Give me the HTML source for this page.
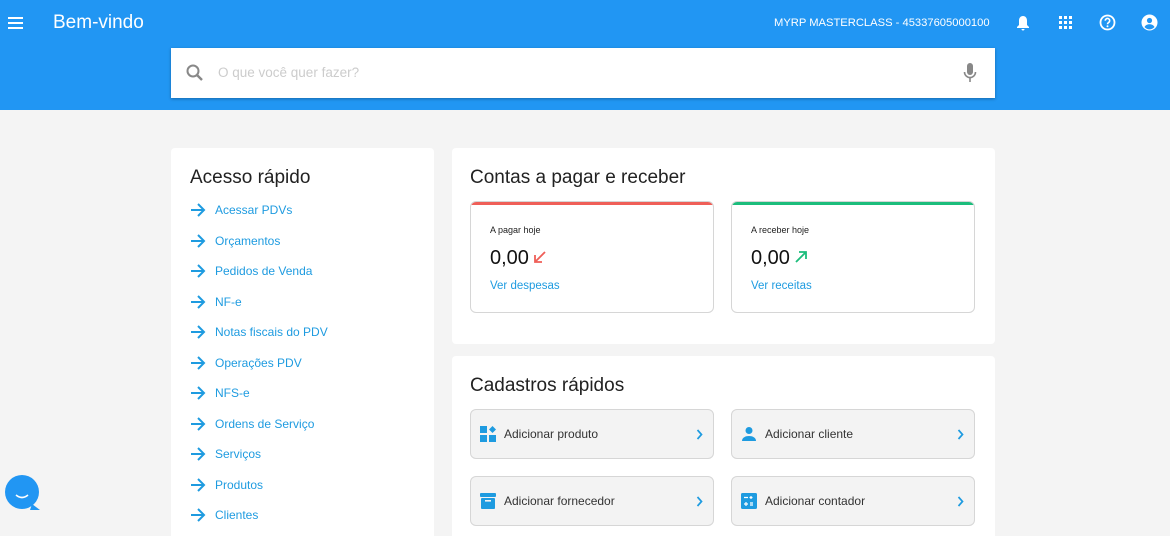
<!DOCTYPE html>
<html><head><meta charset="utf-8"><style>
*{box-sizing:border-box;margin:0;padding:0}
html{width:1170px;height:536px;overflow:hidden}
body{width:1170px;height:536px;overflow:hidden;background:#f4f4f4;font-family:"Liberation Sans",sans-serif;position:relative}
.hdr{position:absolute;left:0;top:0;width:1170px;height:110px;background:#2196f3}
.abs{position:absolute}
.t{color:#fff}
.search{position:absolute;left:171px;top:48px;width:824px;height:50px;background:#fff;box-shadow:0 1px 3px rgba(0,0,0,.3)}
.card{position:absolute;background:#fff;border-radius:4px}
h2{position:absolute;font-weight:normal;font-size:19px;color:#222}
.li{position:absolute;left:19px;font-size:12px;color:#1e9be0;display:flex;align-items:center}
.li svg{margin-right:9px}
.box{position:absolute;width:244px;height:112px;border:1px solid #d6d6d6;border-radius:6px;background:#fff;overflow:hidden}
.box .bar{position:absolute;left:0;top:0;right:0;height:3px}
.box .l{position:absolute;left:19px;top:23px;font-size:9px;color:#222}
.box .v{position:absolute;left:19px;top:45px;font-size:20px;color:#111}
.box .a{position:absolute;left:19px;top:78px;font-size:11.5px;color:#1e9be0}
.qb{position:absolute;width:244px;height:50px;border:1px solid #d6d6d6;border-radius:6px;background:#f3f3f3;display:flex;align-items:center;padding-left:9px;font-size:12px;color:#333}
.qb svg{margin-right:8px}
.qb .ch{position:absolute;right:10px;top:19px;margin:0}
</style></head><body>
<div class="hdr">
<svg class="abs" style="left:8px;top:16px" width="16" height="14" viewBox="0 0 16 14"><rect y="1" width="15" height="2" fill="#fff"/><rect y="6" width="15" height="2" fill="#fff"/><rect y="11" width="15" height="2" fill="#fff"/></svg>
<div class="abs t" style="left:53px;top:12px;font-size:19px">Bem-vindo</div>
<div class="abs t" style="left:774px;top:17px;font-size:11.2px">MYRP MASTERCLASS - 45337605000100</div>
<svg class="abs" style="left:1016px;top:15px" width="14" height="16" viewBox="0 0 14 16"><path d="M7 1C4.5 1 3 3 3 5.5V10L1 12v1h12v-1l-2-2V5.5C11 3 9.5 1 7 1z M5.5 14h3a1.5 1.5 0 01-3 0z" fill="#fff"/></svg>
<svg class="abs" style="left:1059px;top:16px" width="13" height="13" viewBox="0 0 13 13" fill="#fff"><rect x="0" y="0" width="3" height="3"/><rect x="5" y="0" width="3" height="3"/><rect x="10" y="0" width="3" height="3"/><rect x="0" y="5" width="3" height="3"/><rect x="5" y="5" width="3" height="3"/><rect x="10" y="5" width="3" height="3"/><rect x="0" y="10" width="3" height="3"/><rect x="5" y="10" width="3" height="3"/><rect x="10" y="10" width="3" height="3"/></svg>
<svg class="abs" style="left:1099px;top:14px" width="17" height="17" viewBox="0 0 17 17"><circle cx="8.5" cy="8.5" r="7" fill="none" stroke="#fff" stroke-width="1.8"/><path d="M6.3 6.7a2.2 2.2 0 114 1.2c-.8.7-1.8 1-1.8 2.3" fill="none" stroke="#fff" stroke-width="1.6"/><circle cx="8.5" cy="12.3" r="1" fill="#fff"/></svg>
<svg class="abs" style="left:1141px;top:14px" width="17" height="17" viewBox="0 0 17 17"><circle cx="8.5" cy="8.5" r="8" fill="#fff"/><circle cx="8.5" cy="6.5" r="2.6" fill="#2196f3"/><path d="M3.5 13c1-2 3-2.8 5-2.8s4 .8 5 2.8a6.5 6.5 0 01-10 0z" fill="#2196f3"/></svg>
</div>
<div class="search">
<svg class="abs" style="left:14px;top:15px" width="20" height="20" viewBox="0 0 20 20"><circle cx="8" cy="8" r="5.5" fill="none" stroke="#888" stroke-width="2"/><path d="M12 12l5 5" stroke="#888" stroke-width="2.4"/></svg>
<div class="abs" style="left:47px;top:17px;font-size:13.5px;color:#ccc">O que você quer fazer?</div>
<svg class="abs" style="left:792px;top:14px" width="14" height="22" viewBox="0 0 14 22"><rect x="4" y="1" width="6" height="12" rx="3" fill="#888"/><path d="M1.5 10a5.5 5.5 0 0011 0M7 15.5V20" fill="none" stroke="#888" stroke-width="1.6"/></svg>
</div>
<div class="card" style="left:171px;top:148px;width:263px;height:400px">
<h2 style="left:19px;top:19px">Acesso rápido</h2>
<div class="li" style="top:55px"><svg width="16" height="14" viewBox="0 0 16 14"><path d="M1 7h13M8 1l6 6-6 6" fill="none" stroke="#1e9be0" stroke-width="2"/></svg>Acessar PDVs</div>
<div class="li" style="top:86px"><svg width="16" height="14" viewBox="0 0 16 14"><path d="M1 7h13M8 1l6 6-6 6" fill="none" stroke="#1e9be0" stroke-width="2"/></svg>Orçamentos</div>
<div class="li" style="top:116px"><svg width="16" height="14" viewBox="0 0 16 14"><path d="M1 7h13M8 1l6 6-6 6" fill="none" stroke="#1e9be0" stroke-width="2"/></svg>Pedidos de Venda</div>
<div class="li" style="top:147px"><svg width="16" height="14" viewBox="0 0 16 14"><path d="M1 7h13M8 1l6 6-6 6" fill="none" stroke="#1e9be0" stroke-width="2"/></svg>NF-e</div>
<div class="li" style="top:177px"><svg width="16" height="14" viewBox="0 0 16 14"><path d="M1 7h13M8 1l6 6-6 6" fill="none" stroke="#1e9be0" stroke-width="2"/></svg>Notas fiscais do PDV</div>
<div class="li" style="top:208px"><svg width="16" height="14" viewBox="0 0 16 14"><path d="M1 7h13M8 1l6 6-6 6" fill="none" stroke="#1e9be0" stroke-width="2"/></svg>Operações PDV</div>
<div class="li" style="top:238px"><svg width="16" height="14" viewBox="0 0 16 14"><path d="M1 7h13M8 1l6 6-6 6" fill="none" stroke="#1e9be0" stroke-width="2"/></svg>NFS-e</div>
<div class="li" style="top:269px"><svg width="16" height="14" viewBox="0 0 16 14"><path d="M1 7h13M8 1l6 6-6 6" fill="none" stroke="#1e9be0" stroke-width="2"/></svg>Ordens de Serviço</div>
<div class="li" style="top:299px"><svg width="16" height="14" viewBox="0 0 16 14"><path d="M1 7h13M8 1l6 6-6 6" fill="none" stroke="#1e9be0" stroke-width="2"/></svg>Serviços</div>
<div class="li" style="top:330px"><svg width="16" height="14" viewBox="0 0 16 14"><path d="M1 7h13M8 1l6 6-6 6" fill="none" stroke="#1e9be0" stroke-width="2"/></svg>Produtos</div>
<div class="li" style="top:360px"><svg width="16" height="14" viewBox="0 0 16 14"><path d="M1 7h13M8 1l6 6-6 6" fill="none" stroke="#1e9be0" stroke-width="2"/></svg>Clientes</div>
</div>
<div class="card" style="left:452px;top:148px;width:543px;height:196px">
<h2 style="left:18px;top:19px">Contas a pagar e receber</h2>
<div class="box" style="left:18px;top:53px"><div class="bar" style="background:#ef5f58"></div><div class="l">A pagar hoje</div><div class="v">0,00<svg style="margin-left:4px" width="14" height="14" viewBox="0 0 14 14"><path d="M12 2L2 12M2 5v7h7" fill="none" stroke="#ef5f58" stroke-width="1.8"/></svg></div><div class="a">Ver despesas</div></div>
<div class="box" style="left:279px;top:53px"><div class="bar" style="background:#1cbd7c"></div><div class="l">A receber hoje</div><div class="v">0,00<svg style="margin-left:4px" width="14" height="14" viewBox="0 0 14 14"><path d="M2 12L12 2M5 2h7v7" fill="none" stroke="#1cbd7c" stroke-width="1.8"/></svg></div><div class="a">Ver receitas</div></div>
</div>
<div class="card" style="left:452px;top:356px;width:543px;height:200px">
<h2 style="left:18px;top:19px">Cadastros rápidos</h2>
<div class="qb" style="left:18px;top:53px"><svg width="16" height="16" viewBox="0 0 16 16" fill="#1e9be0"><rect x="0" y="0" width="7" height="7"/><rect x="0" y="9" width="7" height="7"/><rect x="9" y="9" width="7" height="7"/><path d="M12.5 0L16 3.5 12.5 7 9 3.5z"/></svg>Adicionar produto<svg class="ch" width="7" height="11" viewBox="0 0 7 11"><path d="M1.5 1l4 4.5-4 4.5" fill="none" stroke="#1e9be0" stroke-width="1.7"/></svg></div>
<div class="qb" style="left:279px;top:53px"><svg width="16" height="16" viewBox="0 0 16 16" fill="#1e9be0"><circle cx="8" cy="4.5" r="3.5"/><path d="M1 15c0-3.5 3.5-5 7-5s7 1.5 7 5z"/></svg>Adicionar cliente<svg class="ch" width="7" height="11" viewBox="0 0 7 11"><path d="M1.5 1l4 4.5-4 4.5" fill="none" stroke="#1e9be0" stroke-width="1.7"/></svg></div>
<div class="qb" style="left:18px;top:120px"><svg width="16" height="16" viewBox="0 0 16 16" fill="#1e9be0"><rect x="0" y="0" width="16" height="4" rx="1"/><rect x="1" y="5" width="14" height="11" rx="1"/><rect x="5" y="7" width="6" height="1.6" fill="#f3f3f3"/></svg>Adicionar fornecedor<svg class="ch" width="7" height="11" viewBox="0 0 7 11"><path d="M1.5 1l4 4.5-4 4.5" fill="none" stroke="#1e9be0" stroke-width="1.7"/></svg></div>
<div class="qb" style="left:279px;top:120px"><svg width="16" height="16" viewBox="0 0 16 16"><rect width="16" height="16" rx="1.5" fill="#1e9be0"/><path d="M3 4.5h4M10 3v3M8.5 4.5h3M3 11h4M9 10h3M9 12h3M5 9v4" stroke="#fff" stroke-width="1.2"/></svg>Adicionar contador<svg class="ch" width="7" height="11" viewBox="0 0 7 11"><path d="M1.5 1l4 4.5-4 4.5" fill="none" stroke="#1e9be0" stroke-width="1.7"/></svg></div>
</div>
<svg class="abs" style="left:4px;top:474px" width="38" height="38" viewBox="0 0 38 38"><circle cx="18" cy="18" r="17" fill="#2196f3"/><path d="M28 30l8 6h-10z" fill="#2196f3"/><path d="M12 21q6 5 12 0" fill="none" stroke="#fff" stroke-width="1.6"/></svg>
</body></html>
